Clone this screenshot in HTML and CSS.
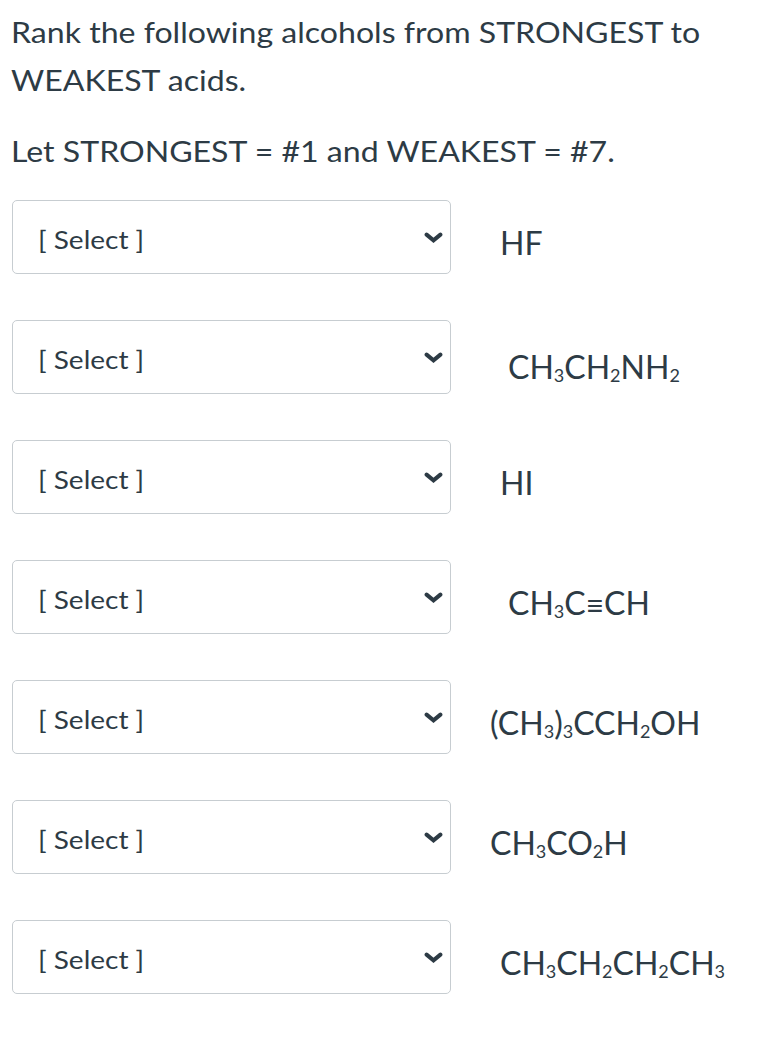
FILE: index.html
```html
<!DOCTYPE html>
<html lang="en">
<head>
<meta charset="utf-8">
<title>Rank acids</title>
<link rel="stylesheet" href="styles.css">
</head>
<body>
<main class="question">
  <p class="prompt">Rank the following alcohols from STRONGEST to WEAKEST acids.</p>
  <p class="prompt prompt-second">Let STRONGEST = #1 and WEAKEST = #7.</p>

  <div class="rows">
    <div class="row">
      <div class="select"><span class="select-text">[ Select ]</span><svg class="chev" viewBox="0 0 19 11" width="19" height="11"><polyline points="2.6,2.6 9.5,8.4 16.4,2.6"/></svg></div>
      <div class="label label-a">HF</div>
    </div>
    <div class="row">
      <div class="select"><span class="select-text">[ Select ]</span><svg class="chev" viewBox="0 0 19 11" width="19" height="11"><polyline points="2.6,2.6 9.5,8.4 16.4,2.6"/></svg></div>
      <div class="label label-b label-low">CH<sub>3</sub>CH<sub>2</sub>NH<sub>2</sub></div>
    </div>
    <div class="row">
      <div class="select"><span class="select-text">[ Select ]</span><svg class="chev" viewBox="0 0 19 11" width="19" height="11"><polyline points="2.6,2.6 9.5,8.4 16.4,2.6"/></svg></div>
      <div class="label label-a">HI</div>
    </div>
    <div class="row">
      <div class="select"><span class="select-text">[ Select ]</span><svg class="chev" viewBox="0 0 19 11" width="19" height="11"><polyline points="2.6,2.6 9.5,8.4 16.4,2.6"/></svg></div>
      <div class="label label-b">CH<sub>3</sub>C<span class="bond">≡</span>CH</div>
    </div>
    <div class="row">
      <div class="select"><span class="select-text">[ Select ]</span><svg class="chev" viewBox="0 0 19 11" width="19" height="11"><polyline points="2.6,2.6 9.5,8.4 16.4,2.6"/></svg></div>
      <div class="label label-c">(CH<sub>3</sub>)<sub>3</sub>CCH<sub>2</sub>OH</div>
    </div>
    <div class="row">
      <div class="select"><span class="select-text">[ Select ]</span><svg class="chev" viewBox="0 0 19 11" width="19" height="11"><polyline points="2.6,2.6 9.5,8.4 16.4,2.6"/></svg></div>
      <div class="label label-c">CH<sub>3</sub>CO<sub>2</sub>H</div>
    </div>
    <div class="row">
      <div class="select"><span class="select-text">[ Select ]</span><svg class="chev" viewBox="0 0 19 11" width="19" height="11"><polyline points="2.6,2.6 9.5,8.4 16.4,2.6"/></svg></div>
      <div class="label label-a">CH<sub>3</sub>CH<sub>2</sub>CH<sub>2</sub>CH<sub>3</sub></div>
    </div>
  </div>
</main>
</body>
</html>
```

FILE: styles.css
```css
html, body {
  margin: 0;
  padding: 0;
  background: #ffffff;
}

body {
  font-family: Lato, "Open Sans", "Liberation Sans", sans-serif;
  color: #2d3b45;
}

.question {
  padding: 8px 12px 0 11px;
}

.prompt {
  margin: 0;
  font-size: 28.5px;
  line-height: 48px;
  width: 640px;
  transform: scaleX(1.125);
  transform-origin: 0 0;
}

.prompt-second {
  margin-top: 23px;
}

.rows {
  margin-top: 25px;
  display: flex;
  flex-direction: column;
  gap: 46px;
}

.row {
  display: flex;
  align-items: flex-start;
  height: 74px;
}

.select {
  box-sizing: border-box;
  width: 439px;
  height: 74px;
  margin-left: 1px;
  border: 1px solid #c7cdd1;
  border-radius: 5px;
  background: #ffffff;
  display: flex;
  align-items: center;
  justify-content: space-between;
  padding: 4px 7px 0 25px;
}

.select-text {
  display: inline-block;
  font-size: 25px;
  line-height: 30px;
  transform: scaleX(1.12);
  transform-origin: 0 50%;
}

.chev {
  display: block;
  margin-top: -3px;
}

.chev polyline {
  fill: none;
  stroke: #2d3b45;
  stroke-width: 4;
  stroke-linecap: round;
  stroke-linejoin: miter;
}

.label {
  font-size: 32px;
  line-height: 40px;
  padding-top: 23px;
  white-space: nowrap;
}

.label-low {
  padding-top: 27px;
}

.label-a {
  margin-left: 49px;
}

.label-b {
  margin-left: 57px;
}

.label-c {
  margin-left: 39px;
}

.label sub {
  font-size: 18px;
  line-height: 0;
  vertical-align: -3px;
}

.bond {
  font-family: "Liberation Sans", sans-serif;
  font-size: 28px;
  margin: 0 1px;
}
```
